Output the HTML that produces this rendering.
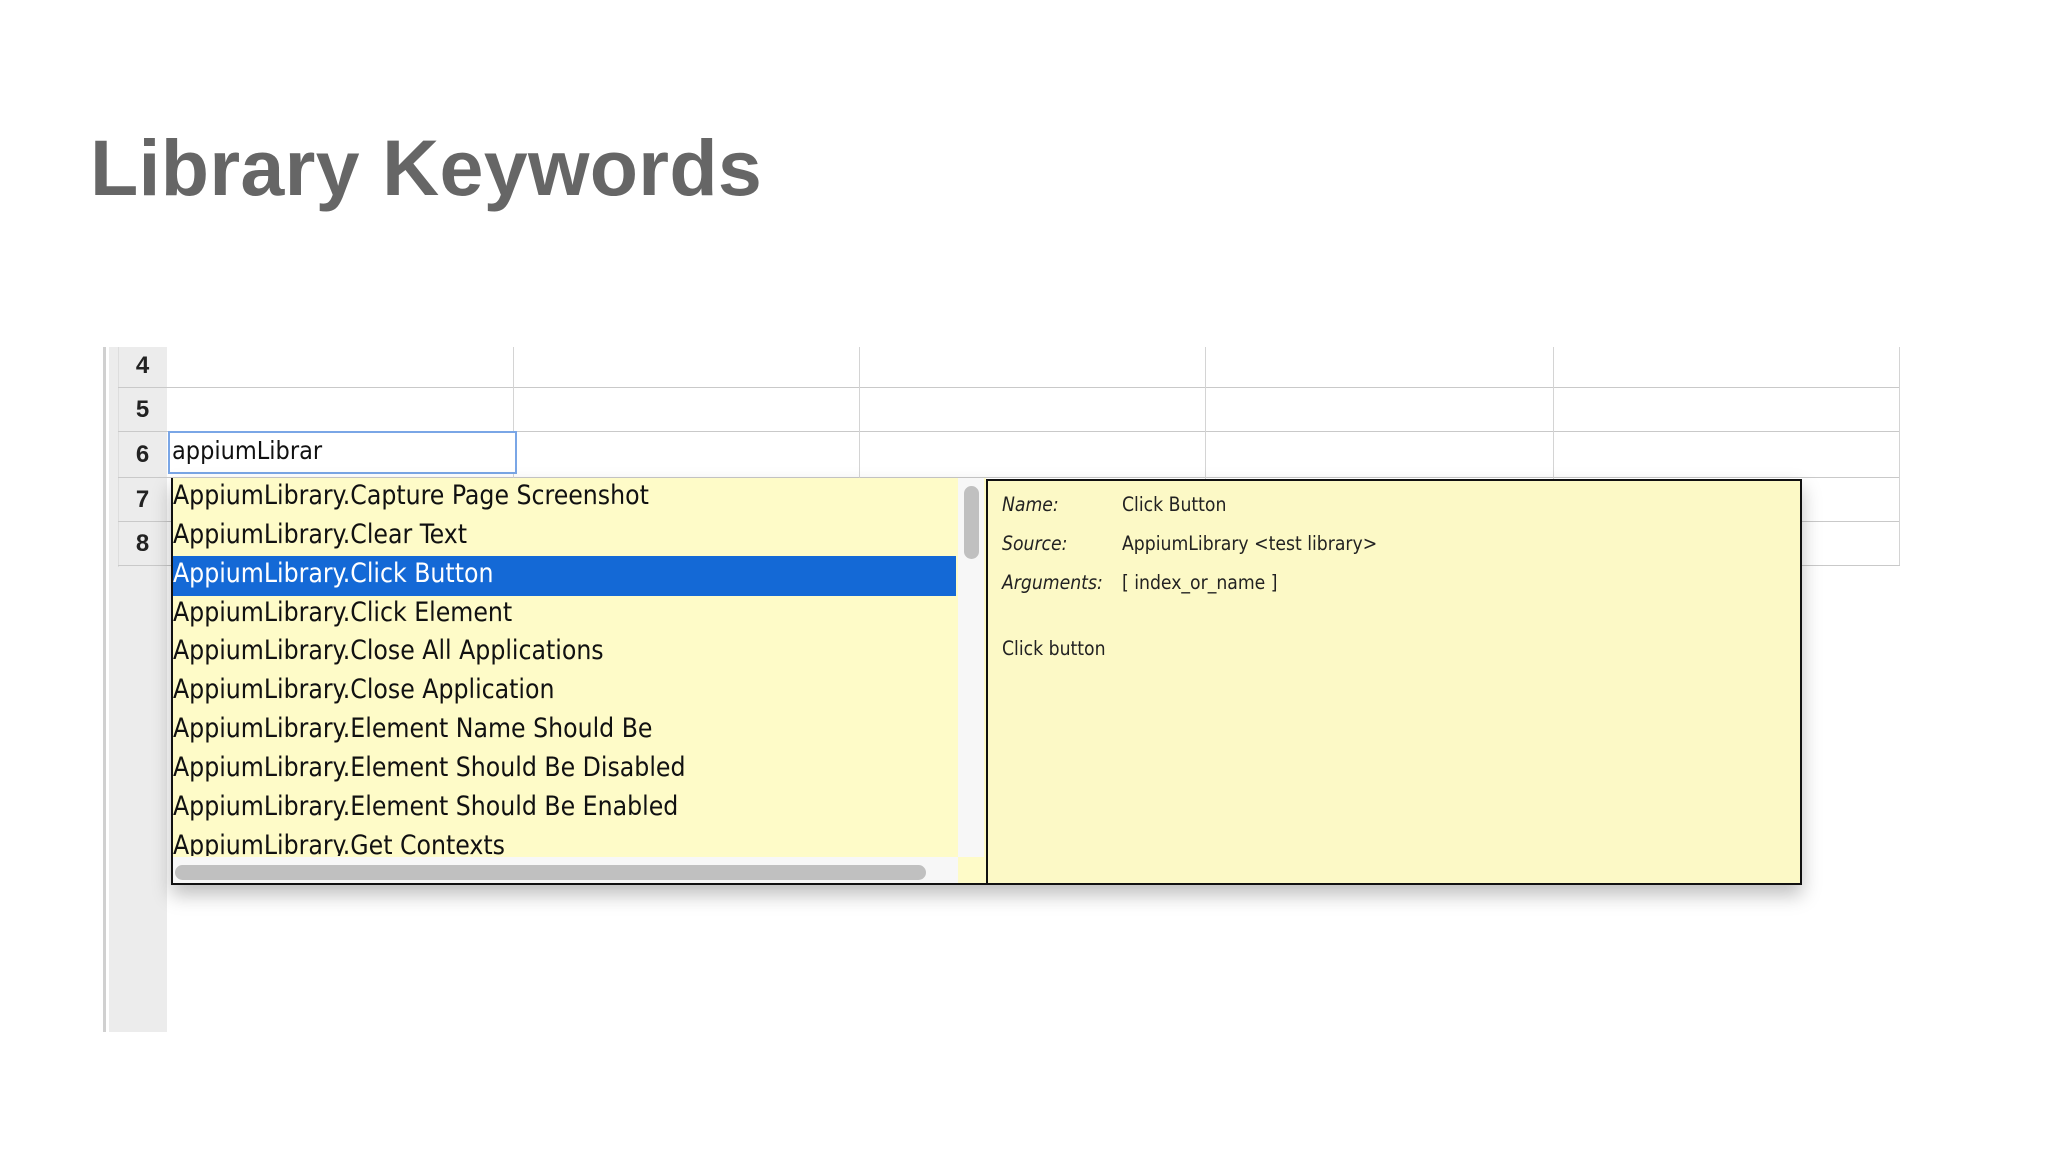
<!DOCTYPE html>
<html><head><meta charset="utf-8"><style>
body{margin:0;width:2048px;height:1152px;background:#fff;position:relative;overflow:hidden;font-family:"Liberation Sans",sans-serif}
.abs{position:absolute}
h1{position:absolute;left:90px;top:118px;margin:0;font-size:79px;font-weight:bold;color:#666;line-height:100px;letter-spacing:0.3px}
.hl{position:absolute;height:1px;background:#c9c9c9}
.vl{position:absolute;width:1px;background:#d4d4d4}
.num{position:absolute;left:118px;width:49px;text-align:center;font-weight:bold;font-size:24px;color:#222}
.item{position:absolute;left:173px;font-size:26.3px;color:#111;height:39px;line-height:39px;white-space:nowrap;font-family:"DejaVu Sans Condensed","Liberation Sans",sans-serif}
.lab{position:absolute;left:1002px;font-size:19.2px;font-style:italic;color:#222;font-family:"DejaVu Sans Condensed","Liberation Sans",sans-serif}
.val{position:absolute;left:1122px;font-size:19.2px;color:#222;font-family:"DejaVu Sans Condensed","Liberation Sans",sans-serif}
</style></head><body>
<h1>Library Keywords</h1>
<div class="abs" style="left:103px;top:347px;width:3px;height:685px;background:#d0d0d0"></div>
<div class="abs" style="left:109px;top:347px;width:58px;height:685px;background:#ececec"></div>
<div class="abs" style="left:118px;top:347px;width:1px;height:220px;background:#ddd"></div>
<div class="abs" style="left:167px;top:347px;width:1733px;height:218px;background:#fff"></div>
<div class="hl" style="left:118px;top:387px;width:1782px"></div>
<div class="hl" style="left:118px;top:431px;width:1782px"></div>
<div class="hl" style="left:118px;top:477px;width:1782px"></div>
<div class="hl" style="left:118px;top:521px;width:1782px"></div>
<div class="hl" style="left:118px;top:565px;width:1782px"></div>
<div class="vl" style="left:513px;top:347px;height:218px"></div>
<div class="vl" style="left:859px;top:347px;height:218px"></div>
<div class="vl" style="left:1205px;top:347px;height:218px"></div>
<div class="vl" style="left:1553px;top:347px;height:218px"></div>
<div class="vl" style="left:1899px;top:347px;height:218px"></div>
<div class="num" style="top:352px">4</div>
<div class="num" style="top:396px">5</div>
<div class="num" style="top:441px">6</div>
<div class="num" style="top:486px">7</div>
<div class="num" style="top:530px">8</div>
<div class="abs" style="left:168px;top:431px;width:349px;height:43px;border:2px solid #7aa6e6;box-sizing:border-box;background:#fff"></div>
<div class="abs" style="left:172px;top:433px;font-size:25px;line-height:36px;color:#111;font-family:'DejaVu Sans Condensed','Liberation Sans',sans-serif">appiumLibrar</div>
<div class="abs" style="left:171px;top:478px;width:1631px;height:407px;box-shadow:0 10px 18px rgba(0,0,0,0.25)"></div>
<div class="abs" style="left:171px;top:478px;width:815px;height:407px;background:#fefbc8;border-left:2px solid #111;border-bottom:2px solid #111;box-sizing:border-box;overflow:hidden"></div>
<div class="abs" style="left:173px;top:556px;width:783px;height:40px;background:#1469d6"></div>
<div class="item" style="top:477px">AppiumLibrary.Capture Page Screenshot</div>
<div class="item" style="top:516px">AppiumLibrary.Clear Text</div>
<div class="item" style="top:555px;color:#fff">AppiumLibrary.Click Button</div>
<div class="item" style="top:594px">AppiumLibrary.Click Element</div>
<div class="item" style="top:632px">AppiumLibrary.Close All Applications</div>
<div class="item" style="top:671px">AppiumLibrary.Close Application</div>
<div class="item" style="top:710px">AppiumLibrary.Element Name Should Be</div>
<div class="item" style="top:749px">AppiumLibrary.Element Should Be Disabled</div>
<div class="item" style="top:788px">AppiumLibrary.Element Should Be Enabled</div>
<div class="abs" style="left:173px;top:808px;width:783px;height:48px;overflow:hidden"><div class="item" style="left:0;top:19px">AppiumLibrary.Get Contexts</div></div>
<div class="abs" style="left:958px;top:478px;width:26px;height:379px;background:#f7f7f7"></div>
<div class="abs" style="left:964px;top:486px;width:15px;height:73px;border-radius:8px;background:#c0c0c0"></div>
<div class="abs" style="left:173px;top:857px;width:785px;height:26px;background:#f7f7f7"></div>
<div class="abs" style="left:175px;top:865px;width:751px;height:15px;border-radius:8px;background:#c0c0c0"></div>
<div class="abs" style="left:986px;top:479px;width:816px;height:406px;background:#fcf9c6;border:2px solid #111;box-sizing:border-box"></div>
<div class="lab" style="top:493px">Name:</div><div class="val" style="top:493px">Click Button</div>
<div class="lab" style="top:532px">Source:</div><div class="val" style="top:532px">AppiumLibrary &lt;test library&gt;</div>
<div class="lab" style="top:571px">Arguments:</div><div class="val" style="top:571px">[ index_or_name ]</div>
<div class="val" style="top:637px;left:1002px">Click button</div>
</body></html>
